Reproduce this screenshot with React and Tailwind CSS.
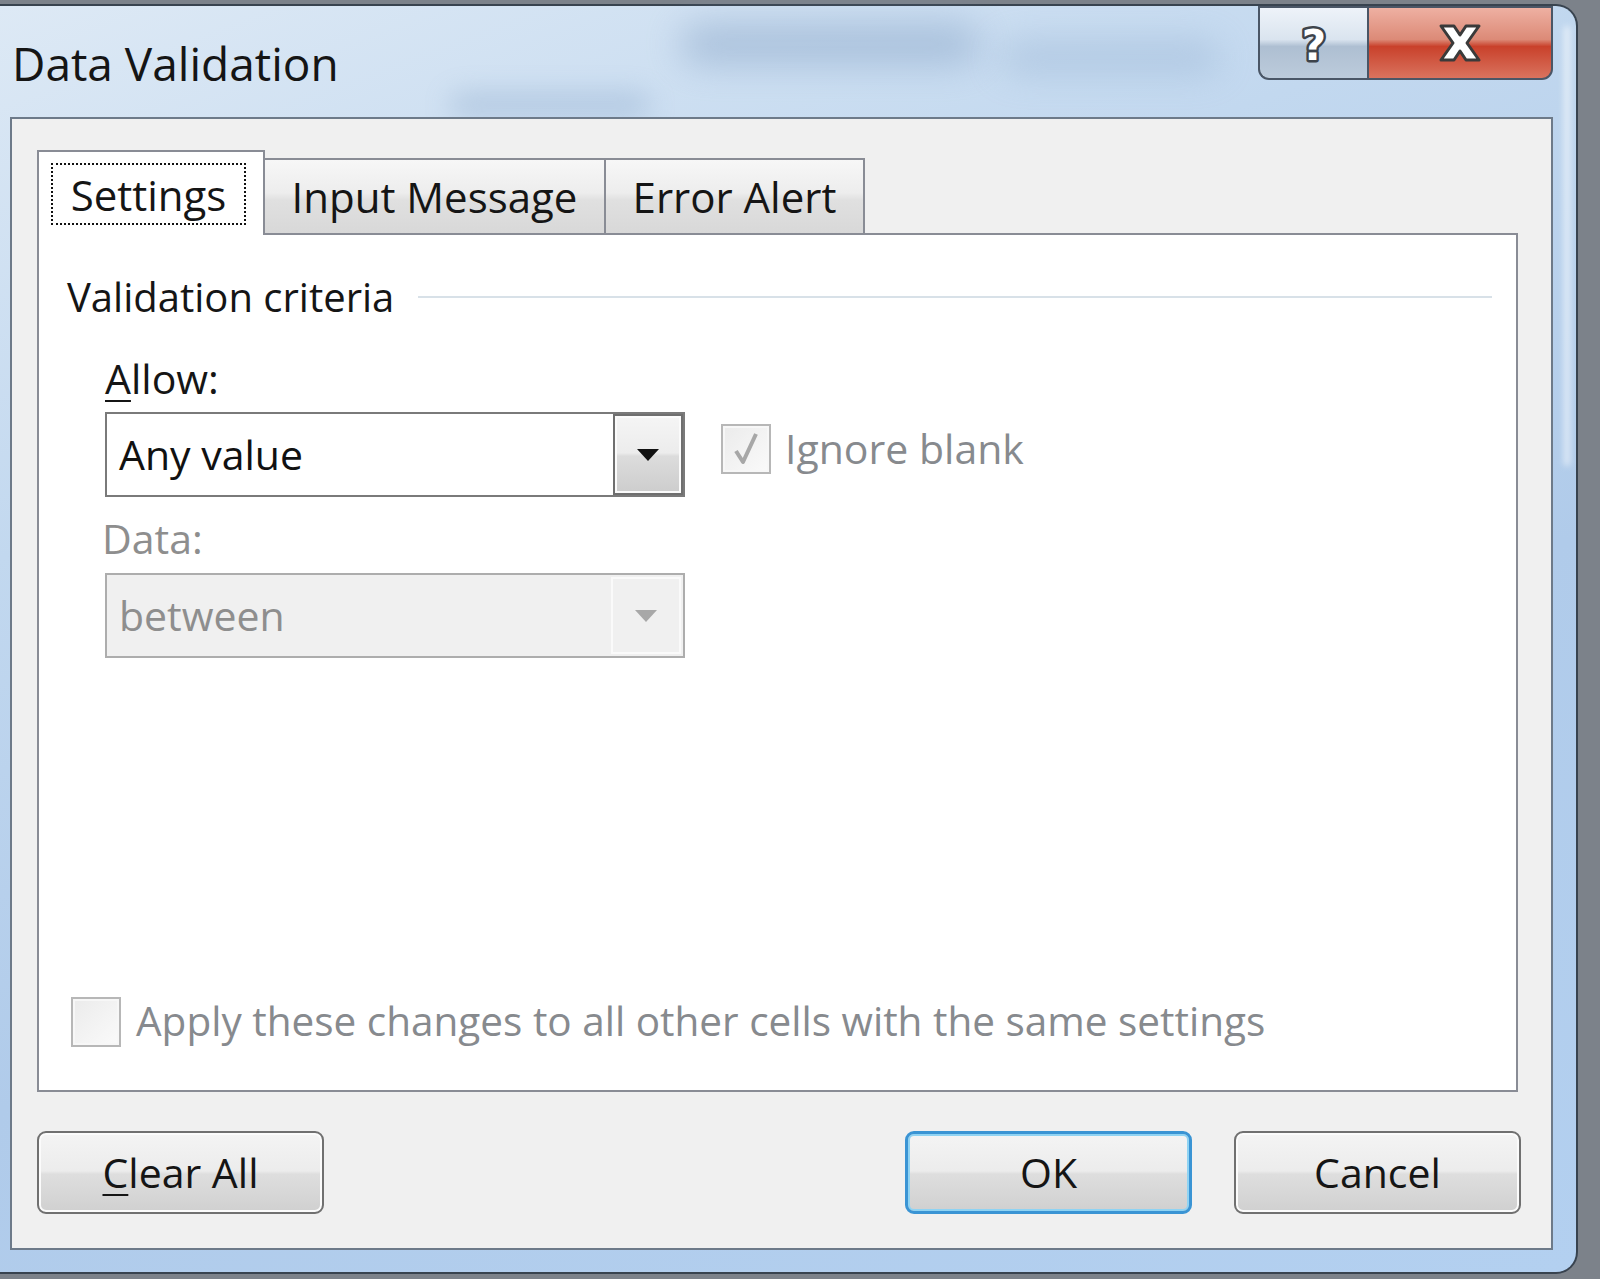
import React from 'react'

const FONT = "font-['Open_Sans','Noto_Sans',sans-serif]"

function Tab({ active, width, children }) {
  if (active) {
    return (
      <div
        className={`relative z-10 h-[85px] -mb-[2px] ${width} border-2 border-b-0 border-[#898c95] bg-white flex items-start pl-[12px] pt-[11px]`}
      >
        <div className="w-[195px] h-[62px] flex items-center justify-center border-2 border-dotted border-[#111]">
          {children}
        </div>
      </div>
    )
  }
  return (
    <div
      className={`mt-[8px] h-[75px] ${width} border-2 border-l-0 border-b-0 border-[#898c95] flex items-center justify-center
                  bg-[linear-gradient(to_bottom,#f7f7f7_0%,#ededed_45%,#e0e0e0_55%,#d8d8d8_100%)]`}
    >
      {children}
    </div>
  )
}

function WinButton({ primary, children }) {
  return (
    <button
      className={`w-[287px] h-[83px] rounded-[9px] flex items-center justify-center text-[41px] text-[#151515]
                  bg-[linear-gradient(to_bottom,#f4f4f4_0%,#ececec_48%,#dedede_52%,#d0d0d0_100%)]
                  ${primary
                    ? 'border-[3px] border-[#3a94d4] shadow-[inset_0_0_0_2px_#8fd3f3]'
                    : 'border-2 border-[#707070] shadow-[inset_0_0_0_2px_#fbfbfb]'}`}
    >
      {children}
    </button>
  )
}

function Arrow({ color }) {
  return (
    <svg width="22" height="12" viewBox="0 0 22 12">
      <polygon points="0,0 22,0 11,12" fill={color} />
    </svg>
  )
}

function Combo({ value, disabled }) {
  return (
    <div
      className={`w-[580px] h-[85px] border-2 flex ${disabled ? 'border-[#adadad] bg-[#f0f0f0]' : 'border-[#7a7a7a] bg-white'}`}
    >
      <div className={`flex-1 flex items-center pl-[12px] text-[41px] ${disabled ? 'text-[#8e8e8e]' : 'text-[#111]'}`}>
        {value}
      </div>
      {disabled ? (
        <div className="w-[70px] my-[2px] mr-[2px] border-2 border-[#fafafa] flex items-center justify-center">
          <Arrow color="#a8a8a8" />
        </div>
      ) : (
        <div
          className="w-[70px] border-2 border-[#6f6f6f] flex items-center justify-center
                     bg-[linear-gradient(to_bottom,#f5f5f5_0%,#ececec_48%,#dcdcdc_52%,#cdcdcd_100%)]
                     shadow-[inset_0_0_0_2px_#fbfbfb]"
        >
          <Arrow color="#111" />
        </div>
      )}
    </div>
  )
}

function Check({ checked }) {
  return (
    <div className="w-[50px] h-[50px] border-2 border-[#b7b7b7] bg-[linear-gradient(135deg,#ebebeb_0%,#fafafa_100%)] shadow-[inset_0_0_0_2px_#f7f7f7] flex items-center justify-center">
      {checked && (
        <svg width="30" height="36" viewBox="0 0 30 36">
          <path d="M5 20 L12 31 L25 3" fill="none" stroke="#a7a7a7" strokeWidth="4" strokeLinejoin="round" />
        </svg>
      )}
    </div>
  )
}

export default function App() {
  return (
    <div className={`w-[1600px] h-[1279px] overflow-hidden bg-[#7c828a] pt-[4px] ${FONT}`}>
      <div
        className="relative w-[1578px] h-[1270px] rounded-r-[22px] border-2 border-l-0 border-[#38434f] flex flex-col
                   bg-[linear-gradient(160deg,#dde9f5_0%,#c2d8ef_30%,#b0cbea_60%,#b3d0f0_100%)]"
      >
        {/* blurred glass behind the title bar */}
        <div className="absolute left-[680px] top-[18px] w-[300px] h-[40px] rounded-full bg-[#7d9bc0] opacity-45 blur-[18px]" />
        <div className="absolute left-[1000px] top-[36px] w-[220px] h-[30px] rounded-full bg-[#89a7ca] opacity-40 blur-[18px]" />
        <div className="absolute left-[450px] top-[88px] w-[200px] h-[22px] rounded-full bg-[#7e9dc2] opacity-40 blur-[14px]" />
        <div className="absolute right-[6px] top-[20px] w-[6px] h-[440px] rounded-full bg-white opacity-60 blur-[3px]" />

        {/* title bar */}
        <div className="relative h-[111px] flex justify-between">
          <div className="pl-[12px] pt-[29px] text-[46px] leading-[56px] text-[#151515]">Data Validation</div>
          <div className="flex h-[74px] mr-[23px]">
            <div
              className="w-[109px] border-2 border-r-0 border-[#4a5666] rounded-bl-[11px] flex items-center justify-center
                         bg-[linear-gradient(to_bottom,#eef3f9_0%,#dae4ef_45%,#aebfd2_55%,#bccbdb_100%)]"
            >
              <svg width="50" height="60" viewBox="0 0 50 60">
                <text
                  x="25"
                  y="47"
                  textAnchor="middle"
                  fontFamily="DejaVu Sans, sans-serif"
                  fontWeight="bold"
                  fontSize="42"
                  fill="#ffffff"
                  stroke="#3d434b"
                  strokeWidth="5"
                  paintOrder="stroke"
                  strokeLinejoin="round"
                >
                  ?
                </text>
              </svg>
            </div>
            <div
              className="w-[186px] border-2 border-[#4a5666] rounded-br-[11px] flex items-center justify-center
                         bg-[linear-gradient(to_bottom,#eeb0a2_0%,#dc8a77_45%,#c9412b_55%,#d9735e_100%)]"
            >
              <svg width="44" height="40" viewBox="0 0 44 40">
                <polygon
                  points="3,3 16,3 22,12 28,3 41,3 29,20 41,37 28,37 22,28 16,37 3,37 15,20"
                  fill="#ffffff"
                  stroke="#3a3a3a"
                  strokeWidth="3"
                  strokeLinejoin="round"
                />
              </svg>
            </div>
          </div>
        </div>

        {/* client area */}
        <div className="relative ml-[10px] mr-[23px] h-[1133px] border-2 border-[#6d7a89] bg-[#f0f0f0] flex flex-col pl-[25px] pr-[33px] pt-[31px] text-[41px] text-[#151515]">
          <div className="flex items-start text-[42px]">
            <Tab active width="w-[228px]">Settings</Tab>
            <Tab width="w-[341px]">Input Message</Tab>
            <Tab width="w-[259px]">Error Alert</Tab>
          </div>

          <div className="h-[859px] border-2 border-[#898c95] bg-white flex flex-col">
            <div className="mt-[38px] h-[48px] flex items-center pl-[28px] pr-[24px] text-[40px]">
              <span>Validation criteria</span>
              <div className="flex-1 h-[2px] bg-[#d8e1e8] ml-[24px]" />
            </div>

            <div className="mt-[33px] pl-[66px] flex flex-col">
              <div className="h-[48px] leading-[48px]">
                <span className="underline decoration-2 underline-offset-[6px]">A</span>llow:
              </div>
              <div className="mt-[10px] flex items-start">
                <Combo value="Any value" />
                <div className="ml-[36px] mt-[6px] flex items-center gap-[14px] text-[#878a8e]">
                  <Check checked />
                  <span>Ignore blank</span>
                </div>
              </div>
              <div className="mt-[17px] h-[48px] leading-[48px] text-[#8e8e8e] -ml-[3px]">Data:</div>
              <div className="mt-[11px]">
                <Combo value="between" disabled />
              </div>
            </div>

            <div className="mt-auto mb-[38px] ml-[32px] flex items-center gap-[15px] text-[40.5px] text-[#878a8e]">
              <Check />
              <span>Apply these changes to all other cells with the same settings</span>
            </div>
          </div>

          <div className="mt-[39px] -mr-[3px] flex items-center">
            <WinButton>
              <span>
                <span className="underline decoration-2 underline-offset-[6px]">C</span>lear All
              </span>
            </WinButton>
            <div className="flex-1" />
            <WinButton primary>OK</WinButton>
            <div className="w-[42px]" />
            <WinButton>Cancel</WinButton>
          </div>
        </div>
      </div>
    </div>
  )
}
